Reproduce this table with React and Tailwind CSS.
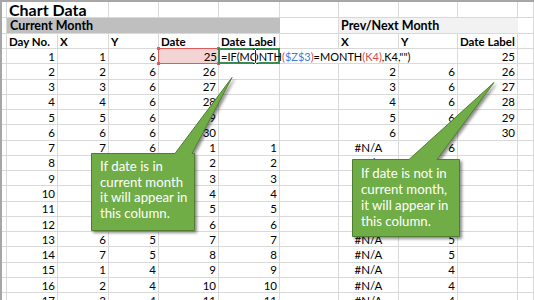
import React from "react";

const GRID = "grid grid-cols-[5px_51px_51px_50px_60px_61px_59px_60px_59px_60px_1fr] grid-rows-[100%] leading-[13px]";
const CELL = "border-r border-b border-[#d9d9d9] flex items-center px-[2px] whitespace-nowrap overflow-visible";

const left = [
  [1, 1, 6, 25, "F"],
  [2, 2, 6, 26, ""],
  [3, 3, 6, 27, ""],
  [4, 4, 6, 28, ""],
  [5, 5, 6, 29, ""],
  [6, 6, 6, 30, ""],
  [7, 7, 6, 1, 1],
  [8, 1, 5, 2, 2],
  [9, 2, 5, 3, 3],
  [10, 3, 5, 4, 4],
  [11, 4, 5, 5, 5],
  [12, 5, 5, 6, 6],
  [13, 6, 5, 7, 7],
  [14, 7, 5, 8, 8],
  [15, 1, 4, 9, 9],
  [16, 2, 4, 10, 10],
  [17, 3, 4, 11, 11],
];

const right = [
  ["", "", 25],
  [2, 6, 26],
  [3, 6, 27],
  [4, 6, 28],
  [5, 6, 29],
  [6, 6, 30],
  ["#N/A", 6, ""],
  ["#N/A", 5, ""],
  ["#N/A", 5, ""],
  ["#N/A", 5, ""],
  ["#N/A", 5, ""],
  ["#N/A", 5, ""],
  ["#N/A", 5, ""],
  ["#N/A", 5, ""],
  ["#N/A", 4, ""],
  ["#N/A", 4, ""],
  ["#N/A", 4, ""],
];

function Num({ v }) {
  return <div className={`${CELL} justify-end`}>{v}</div>;
}

function Formula() {
  return (
    <div className="relative flex items-center px-[2px] whitespace-nowrap overflow-visible border-b border-[#d9d9d9] bg-white z-10 text-[11px]">
      <span className="relative z-10">
        <span>=IF(MONTH</span>
        <span className="text-[#d64b4b]">(</span>
        <span className="text-[#3f7fe0]">$Z$3</span>
        <span className="text-[#d64b4b]">)</span>
        <span>=MONTH</span>
        <span className="text-[#d64b4b]">(K4)</span>
        <span>,K4,"")</span>
      </span>
      <div className="absolute left-[-1px] top-[-1px] w-[62px] h-[16px] border-2 border-[#3a8a55]" />
      <svg className="absolute left-[33px] top-[0px] z-20" width="7" height="15" viewBox="0 0 7 15">
        <path d="M0.5 0.5h2l1 1 1-1h2M3.5 1.5v12M0.5 14.5h2l1-1 1 1h2" stroke="#fff" strokeWidth="2" fill="none" />
        <path d="M0.5 0.5h2l1 1 1-1h2M3.5 1.5v12M0.5 14.5h2l1-1 1 1h2" stroke="#222" strokeWidth="1" fill="none" />
      </svg>
    </div>
  );
}

export default function App() {
  return (
    <div className="relative w-[534px] h-[300px] overflow-hidden bg-white border-t-2 border-l-2 border-[#a6a6a6] text-[11.5px] text-[#000] font-['Lato','Open_Sans',sans-serif]">
      {/* Row 1 */}
      <div className={`${GRID} h-[16px]`}>
        <div className={CELL} />
        <div className="col-span-2 border-r border-b border-[#d9d9d9] flex items-center px-[2px] text-[16px] leading-[15px] font-bold whitespace-nowrap">
          Chart Data
        </div>
        {Array.from({ length: 7 }).map((_, i) => (
          <div key={i} className={CELL} />
        ))}
        <div className={CELL} />
      </div>
      {/* Row 2 */}
      <div className={`${GRID} h-[16px]`}>
        <div className={CELL} />
        <div className="col-span-5 bg-[#bfbfbf] border-b border-[#d9d9d9] flex items-center px-[3px] font-bold text-[12.5px]">
          Current Month
        </div>
        <div className={CELL} />
        <div className="col-span-3 bg-[#f2f2f2] border-b border-[#d9d9d9] flex items-center px-[2px] font-bold text-[12.5px]">
          Prev/Next Month
        </div>
        <div className={CELL} />
      </div>
      {/* Row 3 headers */}
      <div className={`${GRID} h-[15px] font-bold text-[11.5px]`}>
        <div className={CELL} />
        <div className={CELL}>Day No.</div>
        <div className={CELL}>X</div>
        <div className={CELL}>Y</div>
        <div className={CELL}>Date</div>
        <div className={CELL}>Date Label</div>
        <div className={CELL} />
        <div className={CELL}>X</div>
        <div className={CELL}>Y</div>
        <div className={CELL}>Date Label</div>
        <div className={CELL} />
      </div>
      {/* Data rows */}
      {left.map((r, i) => {
        const rr = right[i];
        const first = i === 0;
        return (
          <div key={i} className={`${GRID} h-[15.27px]`}>
            <div className={CELL} />
            <Num v={r[0]} />
            <Num v={r[1]} />
            <Num v={r[2]} />
            {first ? (
              <div className="relative flex items-center justify-end px-[2px] bg-[#f3d4d4]">
                25
                <div className="absolute left-[-1px] top-[-1px] right-0 bottom-0 border border-[#e05a5a]" />
                <div className="absolute left-[-2px] top-[-2px] w-[3px] h-[3px] bg-[#e05a5a]" />
                <div className="absolute right-[-1px] top-[-2px] w-[3px] h-[3px] bg-[#e05a5a]" />
                <div className="absolute left-[-2px] bottom-[-1px] w-[3px] h-[3px] bg-[#e05a5a]" />
                <div className="absolute right-[-1px] bottom-[-1px] w-[3px] h-[3px] bg-[#e05a5a]" />
              </div>
            ) : (
              <Num v={r[3]} />
            )}
            {first ? <Formula /> : <Num v={r[4]} />}
            {first ? <div className="border-b border-[#d9d9d9]" /> : <div className={CELL} />}
            {first ? (
              <div className="border-b border-[#d9d9d9]" />
            ) : rr[0] === "#N/A" ? (
              <div className={`${CELL} justify-center`}>#N/A</div>
            ) : (
              <Num v={rr[0]} />
            )}
            {first ? <div className={CELL} /> : <Num v={rr[1]} />}
            <Num v={rr[2]} />
            <div className={CELL} />
          </div>
        );
      })}

      {/* Callouts */}
      <svg className="absolute left-[-2px] top-[-2px] pointer-events-none z-30 drop-shadow-[2px_2px_1.5px_rgba(0,0,0,0.45)]" width="534" height="300" viewBox="0 0 534 300">
        <path
          d="M91.5 153.5 H175 L232 77.5 L192 153.5 H194.5 V230.5 H91.5 Z"
          fill="#70ad47"
          stroke="#4f7e31"
          strokeWidth="1"
        />
        <path
          d="M352.5 159.5 H409 L494 82.5 L437 159.5 H459.5 V236.5 H352.5 Z"
          fill="#70ad47"
          stroke="#4f7e31"
          strokeWidth="1"
        />
      </svg>
      <div className="absolute left-[98px] top-[157px] z-40 text-white text-[13.2px] leading-[15.7px] font-['Lato',sans-serif]">
        <div>If date is in</div>
        <div>current month</div>
        <div>it will appear in</div>
        <div>this column.</div>
      </div>
      <div className="absolute left-[359px] top-[163px] z-40 text-white text-[13.2px] leading-[16px] font-['Lato',sans-serif]">
        <div>If date is not in</div>
        <div>current month,</div>
        <div>it will appear in</div>
        <div>this column.</div>
      </div>
    </div>
  );
}
